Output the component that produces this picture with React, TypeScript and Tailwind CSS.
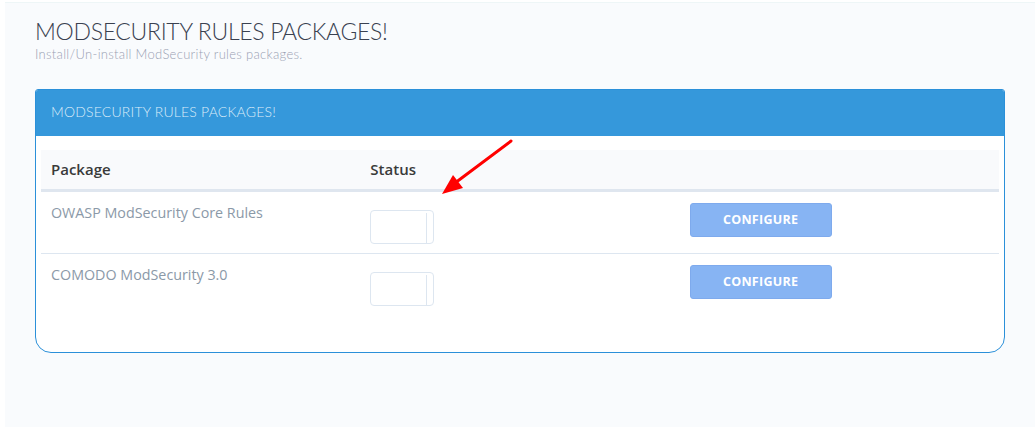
import React from 'react';

const packages = ['OWASP ModSecurity Core Rules', 'COMODO ModSecurity 3.0'];

const Toggle: React.FC = () => (
  <div className="mt-[7px] flex h-[34px] w-[64px] justify-end rounded-[4px] border border-[#dde6f0] bg-white">
    <div className="mt-[2px] h-[30px] w-[7px] rounded-r-[3px] border-l border-[#dde6f0]" />
  </div>
);

export default function App() {
  return (
    <div className="h-[427px] w-full bg-white pl-[5px] pt-[2px]" style={{ fontFamily: '"Open Sans", sans-serif' }}>
      <div className="h-full border-t border-[#eef6f7] bg-[#f9fbfd] pl-[30px] pr-[30px] pt-[14px]">
        {/* Page title */}
        <h1 className="text-[23px] font-light leading-[29px] tracking-[-0.3px] text-[#3a4150]" style={{ fontFamily: 'Lato, sans-serif' }}>
          MODSECURITY RULES PACKAGES!
        </h1>
        <p className="text-[13px] font-light leading-[16px] tracking-[0.3px] text-[#9aa1b3]" style={{ fontFamily: 'Lato, sans-serif' }}>
          Install/Un-install ModSecurity rules packages.
        </p>

        {/* Panel */}
        <div className="mt-[27px] w-[970px] overflow-hidden rounded-t-[3px] rounded-b-[16px] border border-[#2b90d9] bg-white">
          <div className="flex h-[46px] items-center bg-[#3598db] px-[15px] pb-[3px]">
            <span className="text-[14px] font-light tracking-[0.2px] text-[#dcecf9]" style={{ fontFamily: 'Lato, sans-serif' }}>
              MODSECURITY RULES PACKAGES!
            </span>
          </div>

          <div className="relative px-[5px] pb-[36px] pt-[14px]">
            {/* Header row */}
            <div className="grid h-[42px] grid-cols-3 items-center border-b-[3px] border-[#dfe6ef] bg-[#f9fafc]">
              <div className="px-[10px] text-[15px] font-semibold text-[#3a3a3a]">Package</div>
              <div className="px-[10px] text-[15px] font-semibold text-[#3a3a3a]">Status</div>
              <div />
            </div>

            {packages.map((name, i) => (
              <div
                key={name}
                className={`grid h-[62px] grid-cols-3 pt-[11px] ${i === 0 ? 'border-b border-[#dde6f0]' : ''}`}
              >
                <div className="px-[10px] text-[14.3px] leading-[20px] text-[#8b99a8]">{name}</div>
                <div className="px-[10px]">
                  <Toggle />
                </div>
                <div className="px-[10px]">
                  <button className="h-[34px] w-[142px] rounded-[3px] border border-[#7eaaed] bg-[#87b4f3] text-[12.5px] font-bold tracking-[0.3px] text-white">
                    CONFIGURE
                  </button>
                </div>
              </div>
            ))}

            {/* Annotation arrow */}
            <svg className="absolute left-[365px] top-[0px]" width="120" height="70" viewBox="0 0 120 70">
              <line x1="110" y1="5" x2="50" y2="50" stroke="#ff0000" strokeWidth="3" strokeLinecap="round" />
              <polygon points="41,58 52,39 62,52" fill="#ff0000" />
            </svg>
          </div>
        </div>
      </div>
    </div>
  );
}
